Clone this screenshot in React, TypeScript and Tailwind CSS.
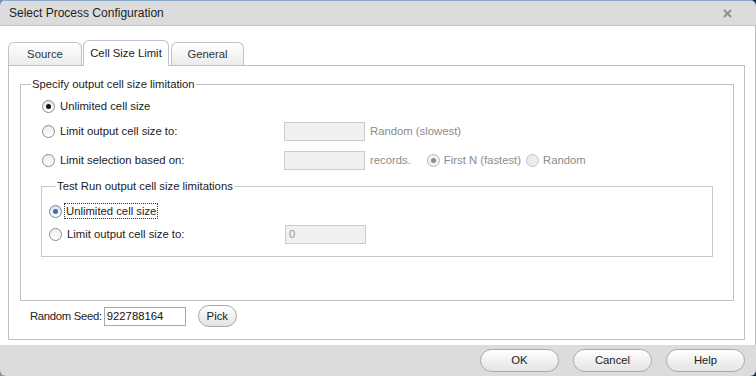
import { clsx } from "clsx";

type RadioKind = "on" | "off" | "focus" | "disabledOn" | "disabledOff";

const radioRing: Record<RadioKind, string> = {
  on: "border-[#8c8c8c] bg-gradient-to-b from-[#e6e6e6] to-white",
  off: "border-[#8c8c8c] bg-gradient-to-b from-[#ececec] to-white",
  focus: "border-[#7088ad] bg-gradient-to-b from-[#d6e0ee] to-white",
  disabledOn: "border-[#b4b4b4] bg-[#f2f2f2]",
  disabledOff: "border-[#c4c4c4] bg-[#ececec]",
};

const radioDot: Partial<Record<RadioKind, string>> = {
  on: "bg-[#111]",
  focus: "bg-[#4d6c9c]",
  disabledOn: "bg-[#8a8a8a]",
};

const Radio = ({ kind }: { kind: RadioKind }) => (
  <span
    className={clsx(
      "flex size-[13px] shrink-0 items-center justify-center rounded-full border",
      radioRing[kind],
    )}
  >
    {radioDot[kind] && (
      <span className={clsx("size-[5px] rounded-full", radioDot[kind])} />
    )}
  </span>
);

const Field = ({ value }: { value?: string }) => (
  <span className="flex h-[19px] w-[81px] items-center border border-[#cccccc] bg-[#f0f0f0] px-[3px] text-[#999]">
    {value}
  </span>
);

const FooterButton = ({ label }: { label: string }) => (
  <button className="flex h-[23px] w-[79px] items-center justify-center rounded-full border border-[#a9a9a9] bg-gradient-to-b from-white to-[#e4e4e4] text-[#222]">
    {label}
  </button>
);

const App = () => {
  return (
    <div className="h-[376px] w-[756px] bg-gradient-to-r from-[#7097c2] to-[#1b2e47] font-['Liberation_Sans',sans-serif] text-[11.3px] text-[#222]">
      <div className="flex h-full flex-col overflow-hidden rounded-[6px]">
        {/* title bar */}
        <div className="flex h-[26px] shrink-0 items-center justify-between border-t border-b border-t-[#88a8cc] border-b-[#c4c4c4] bg-[#dcdcdc] pl-[9px] pr-[24px]">
          <span className="text-[12px] text-[#1e1e1e]">Select Process Configuration</span>
          <svg width="9" height="9" viewBox="0 0 9 9">
            <path d="M1 1L8 8M8 1L1 8" stroke="#8f8f8f" strokeWidth="2" />
          </svg>
        </div>

        {/* body */}
        <div className="flex h-[319px] shrink-0 flex-col border-r border-[#c0c0c0] bg-white pt-[14px] pr-[10px] pl-[8px]">
          <div className="flex h-[25px] items-end">
            <div className="flex h-[23px] w-[74px] items-center justify-center rounded-t-[6px] border border-b-0 border-[#c4c4c4] bg-gradient-to-b from-white to-[#ececec] text-[#333]">
              Source
            </div>
            <div className="relative z-10 -mb-px ml-px flex h-[26px] w-[86px] items-center justify-center rounded-t-[6px] border border-b-0 border-[#b7c3d2] bg-white">
              Cell Size Limit
            </div>
            <div className="ml-[2px] flex h-[23px] w-[73px] items-center justify-center rounded-t-[6px] border border-b-0 border-[#c4c4c4] bg-gradient-to-b from-white to-[#ececec] text-[#333]">
              General
            </div>
          </div>

          <div className="flex h-[275px] flex-col border border-[#c0c0c0] pr-[10px] pl-[11px]">
            {/* outer group */}
            <div className="mt-[18px] border border-[#c0c0c0] pb-[43px] pl-[21px]">
              <span className="-mt-[8px] -ml-[11px] block w-fit bg-white px-[1px] leading-[14px]">
                Specify output cell size limitation
              </span>

              <div className="mt-[5px] flex h-[20px] items-center gap-[5px]">
                <Radio kind="on" />
                <span>Unlimited cell size</span>
              </div>

              <div className="mt-[5px] flex h-[20px] items-center">
                <div className="flex w-[242px] items-center gap-[5px]">
                  <Radio kind="off" />
                  <span>Limit output cell size to:</span>
                </div>
                <Field />
                <span className="ml-[5px] text-[#8c8c8c]">Random (slowest)</span>
              </div>

              <div className="mt-[9px] flex h-[20px] items-center">
                <div className="flex w-[242px] items-center gap-[5px]">
                  <Radio kind="off" />
                  <span>Limit selection based on:</span>
                </div>
                <Field />
                <span className="ml-[5px] text-[#8c8c8c]">records.</span>
                <span className="ml-[16px] flex items-center gap-[4px] text-[#8c8c8c]">
                  <Radio kind="disabledOn" />
                  First N (fastest)
                </span>
                <span className="ml-[5px] flex items-center gap-[4px] text-[#8c8c8c]">
                  <Radio kind="disabledOff" />
                  Random
                </span>
              </div>

              {/* test run group */}
              <div className="mt-[16px] mr-[20px] -ml-px border border-[#c8c8c8] pb-[12px] pl-[7px]">
                <span className="-mt-[8px] ml-[7px] block w-fit bg-white px-[1px] leading-[14px]">
                  Test Run output cell size limitations
                </span>
                <div className="mt-[8px] flex h-[20px] items-center gap-[2px]">
                  <Radio kind="focus" />
                  <span className="border border-dotted border-[#333] px-[1px] leading-[14px]">
                    Unlimited cell size
                  </span>
                </div>
                <div className="mt-[3px] flex h-[20px] items-center">
                  <div className="flex w-[236px] items-center gap-[5px]">
                    <Radio kind="off" />
                    <span>Limit output cell size to:</span>
                  </div>
                  <Field value="0" />
                </div>
              </div>
            </div>

            <div className="mt-[4px] flex items-center pl-[10px]">
              <span className="tracking-[-0.3px]">Random Seed:</span>
              <span className="ml-[2px] flex h-[19px] w-[82px] items-center border border-[#a9a9a9] px-[2px] text-[#111]">
                922788164
              </span>
              <button className="ml-[12px] flex h-[22px] w-[39px] items-center justify-center rounded-full border border-[#a9a9a9] bg-gradient-to-b from-white to-[#e2e2e2] text-[#222]">
                Pick
              </button>
            </div>
          </div>
        </div>

        {/* footer */}
        <div className="flex flex-1 items-start justify-end gap-[14px] bg-[#dcdcdc] pt-[4px] pr-[11px]">
          <FooterButton label="OK" />
          <FooterButton label="Cancel" />
          <FooterButton label="Help" />
        </div>
      </div>
    </div>
  );
};

export default App;
